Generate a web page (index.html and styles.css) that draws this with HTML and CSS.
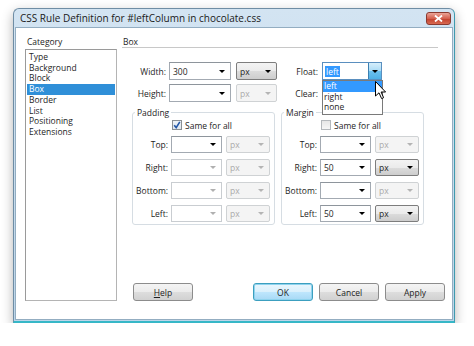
FILE: index.html
```html
<!DOCTYPE html>
<html lang="en">
<head>
  <meta charset="UTF-8">
  <meta name="viewport" content="width=device-width, initial-scale=1.0">
  <title>CSS Rule Definition</title>
  <link rel="stylesheet" href="styles.css">
</head>
<body>
  <div class="window">
    <div class="titlebar">
      <span class="title">CSS Rule Definition for #leftColumn in chocolate.css</span>
      <span class="close">
        <svg width="9" height="7" viewBox="0 0 9 7"><path d="M1 0.5 L8 6.5 M8 0.5 L1 6.5" stroke="#fff" stroke-width="1.8"/></svg>
      </span>
    </div>

    <div class="client">
      <div class="sidebar">
        <div class="caption">Category</div>
        <ul class="list">
          <li>Type</li>
          <li>Background</li>
          <li>Block</li>
          <li class="selected">Box</li>
          <li>Border</li>
          <li>List</li>
          <li>Positioning</li>
          <li>Extensions</li>
        </ul>
      </div>

      <div class="panel">
        <div class="heading">Box</div>

        <div class="form">
          <div class="toprow">
            <div class="col-left">
              <div class="row">
                <span class="lbl">Width:</span>
                <div class="combo wide"><span>300</span><i class="arrow"></i></div>
                <div class="unit narrow on"><span>px</span><i class="arrow"></i></div>
              </div>
              <div class="row">
                <span class="lbl">Height:</span>
                <div class="combo wide"><span></span><i class="arrow"></i></div>
                <div class="unit narrow"><span>px</span><i class="arrow"></i></div>
              </div>
            </div>
            <div class="col-right">
              <div class="row">
                <span class="lbl lbl-r">Float:</span>
                <div class="floatsel">
                  <span class="hl">left</span>
                  <span class="dropbtn"><i class="arrow"></i></span>
                  <ul class="droplist">
                    <li class="hot">left</li>
                    <li>right</li>
                    <li>none</li>
                  </ul>
                  <svg class="cursor" width="12" height="19" viewBox="0 0 12 19">
                    <path d="M0.5 0.5 L0.5 15 L4 11.8 L6.6 17.6 L8.6 16.7 L6.1 11 L10.6 11 Z" fill="#fff" stroke="#000" stroke-width="1"/>
                  </svg>
                </div>
              </div>
              <div class="row">
                <span class="lbl lbl-r">Clear:</span>
                <div class="combo float-w"><span></span><i class="arrow"></i></div>
              </div>
            </div>
          </div>

          <div class="groups">
            <fieldset class="group">
              <legend>Padding</legend>
              <div class="check-row"><span class="check checked">
                <svg width="8" height="8" viewBox="0 0 8 8"><path d="M1.2 4.2 L3.2 6.6 L6.8 0.8" fill="none" stroke="#2357a8" stroke-width="1.6"/></svg>
              </span>Same for all</div>
              <div class="row">
                <span class="lbl">Top:</span>
                <div class="combo"><span></span><i class="arrow"></i></div>
                <div class="unit"><span>px</span><i class="arrow"></i></div>
              </div>
              <div class="row">
                <span class="lbl">Right:</span>
                <div class="combo off"><span></span><i class="arrow"></i></div>
                <div class="unit"><span>px</span><i class="arrow"></i></div>
              </div>
              <div class="row">
                <span class="lbl">Bottom:</span>
                <div class="combo off"><span></span><i class="arrow"></i></div>
                <div class="unit"><span>px</span><i class="arrow"></i></div>
              </div>
              <div class="row">
                <span class="lbl">Left:</span>
                <div class="combo off"><span></span><i class="arrow"></i></div>
                <div class="unit"><span>px</span><i class="arrow"></i></div>
              </div>
            </fieldset>

            <fieldset class="group">
              <legend>Margin</legend>
              <div class="check-row"><span class="check"></span>Same for all</div>
              <div class="row">
                <span class="lbl">Top:</span>
                <div class="combo"><span></span><i class="arrow"></i></div>
                <div class="unit"><span>px</span><i class="arrow"></i></div>
              </div>
              <div class="row">
                <span class="lbl">Right:</span>
                <div class="combo"><span>50</span><i class="arrow"></i></div>
                <div class="unit on"><span>px</span><i class="arrow"></i></div>
              </div>
              <div class="row">
                <span class="lbl">Bottom:</span>
                <div class="combo"><span></span><i class="arrow"></i></div>
                <div class="unit"><span>px</span><i class="arrow"></i></div>
              </div>
              <div class="row">
                <span class="lbl">Left:</span>
                <div class="combo"><span>50</span><i class="arrow"></i></div>
                <div class="unit on"><span>px</span><i class="arrow"></i></div>
              </div>
            </fieldset>
          </div>
        </div>

        <div class="buttons">
          <button class="btn help"><u>H</u>elp</button>
          <button class="btn ok">OK</button>
          <button class="btn">Cancel</button>
          <button class="btn">Apply</button>
        </div>
      </div>
    </div>
  </div>
</body>
</html>
```

FILE: styles.css
```css
body {
  margin: 0;
  background: #fff;
  font-family: "Open Sans", "Noto Sans", sans-serif;
  font-size: 8.5px;
  color: #1e1e1e;
}

.window {
  margin: 8px 0 0 13px;
  width: 442px;
  height: 315px;
  box-sizing: border-box;
  padding: 0 1px 1px 1px;
  display: flex;
  flex-direction: column;
  background: linear-gradient(#d3e4f2, #bcd5e9);
  border: 1px solid #6f8da4;
  border-right-color: #3f9aae;
  border-bottom: 2px solid #36b7c7;
  border-radius: 6px 6px 0 0;
  box-shadow: 0 4px 12px rgba(0, 0, 0, 0.3);
}

.titlebar {
  height: 18px;
  display: flex;
  align-items: center;
  justify-content: space-between;
  padding-left: 5px;
  padding-right: 2px;
}

.title {
  font-size: 10px;
  color: #1a1a1a;
}

.close {
  width: 23px;
  height: 11px;
  margin-top: 1px;
  display: flex;
  align-items: center;
  justify-content: center;
  border: 1px solid #8a3a30;
  border-radius: 3px;
  background: linear-gradient(#eba497, #d4604e 50%, #c13f2c 51%, #d86a52);
}

.client {
  flex: 1;
  display: flex;
  background: #fff;
  border: 1px solid #93adc1;
  padding: 8px 7px 18px 9px;
}

/* category list */
.sidebar {
  width: 92px;
  display: flex;
  flex-direction: column;
}

.caption {
  line-height: 11px;
  padding-left: 2px;
  margin-bottom: 2px;
}

.list {
  flex: 1;
  margin: 0;
  padding: 2px 1px;
  list-style: none;
  border: 1px solid #9a9a9a;
  border-right-color: #b4b4b4;
  border-bottom-color: #b4b4b4;
}

.list li {
  line-height: 10.7px;
  padding-left: 2px;
}

.list .selected {
  background: #2f8fd8;
  color: #fff;
}

/* main panel */
.panel {
  flex: 1;
  margin-left: 5px;
  display: flex;
  flex-direction: column;
}

.heading {
  line-height: 11px;
  padding-left: 1px;
  margin-right: 7px;
  border-bottom: 1px solid #c8c8c8;
}

.form {
  margin-left: 10px;
  margin-top: 14px;
}

.toprow {
  display: flex;
}

.col-left {
  width: 149px;
}

.col-left .row,
.col-right .row {
  height: 18px;
  margin-bottom: 4px;
}

.row {
  display: flex;
  align-items: center;
  height: 18px;
}

.lbl {
  width: 34px;
  margin-right: 3px;
  text-align: right;
}

.lbl-r {
  width: 37px;
  margin-right: 4px;
}

.combo,
.unit {
  box-sizing: border-box;
  height: 17px;
  display: flex;
  align-items: center;
  justify-content: space-between;
  padding: 0 5px 0 3px;
}

.combo {
  width: 51px;
  background: #fff;
  border: 1px solid #a3aab2;
  border-top-color: #8e959c;
}

.combo.wide {
  width: 62px;
  height: 18px;
}

.combo.float-w {
  width: 59px;
}

.combo.off {
  border-color: #c9cdd1;
}

.combo.off .arrow {
  border-top-color: #b0b0b0;
}

.unit {
  width: 44px;
  margin-left: 4px;
  background: #f4f4f4;
  border: 1px solid #cfd2d4;
  border-radius: 2px;
  color: #a9a9a9;
}

.unit .arrow {
  border-top-color: #b4b4b4;
}

.unit.narrow {
  width: 41px;
  height: 18px;
  margin-left: 5px;
}

.unit.on {
  color: #1e1e1e;
  border-color: #7d7d7d;
  background: linear-gradient(#f3f3f3, #ebebeb 50%, #dcdcdc 51%, #cdcdcd);
}

.unit.on .arrow {
  border-top-color: #000;
}

.arrow {
  width: 0;
  height: 0;
  border-left: 3px solid transparent;
  border-right: 3px solid transparent;
  border-top: 3px solid #000;
}

/* float dropdown, open */
.floatsel {
  position: relative;
  box-sizing: border-box;
  width: 60px;
  height: 18px;
  display: flex;
  align-items: center;
  justify-content: space-between;
  padding-left: 2px;
  border: 1px solid #5a8fbf;
  background: #fff;
}

.hl {
  background: #3399ff;
  color: #fff;
  line-height: 11px;
  padding: 0 1px;
}

.dropbtn {
  align-self: stretch;
  width: 12px;
  display: flex;
  align-items: center;
  justify-content: center;
  border-left: 1px solid #3c7fb1;
  background: linear-gradient(#d6eefb, #a9daf5 50%, #6cc0ee 51%, #4fb0e6);
}

.droplist {
  position: absolute;
  top: 17px;
  left: -1px;
  width: 61px;
  box-sizing: border-box;
  margin: 0;
  padding: 0 0 1px;
  list-style: none;
  background: #fff;
  border: 1px solid #7a7a7a;
  z-index: 2;
}

.droplist li {
  line-height: 10.5px;
  padding-left: 1px;
}

.droplist .hot {
  background: #3399ff;
  color: #fff;
}

.cursor {
  position: absolute;
  left: 52px;
  top: 18px;
  z-index: 3;
}

/* padding / margin groups */
.groups {
  display: flex;
  gap: 6px;
  margin-top: 1px;
}

.group {
  width: 143px;
  box-sizing: border-box;
  margin: 0;
  padding: 0 0 2px;
  border: 1px solid #d6dde3;
  border-radius: 3px;
}

.group legend {
  padding: 0 2px;
  margin-left: 2px;
  line-height: 11px;
}

.group .row {
  height: 18px;
  margin-top: 5px;
}

.group .lbl {
  width: 35px;
}

.check-row {
  display: flex;
  align-items: center;
  height: 10px;
  margin-top: 2px;
  padding-left: 39px;
}

.check {
  box-sizing: border-box;
  width: 10px;
  height: 10px;
  margin-right: 3px;
  display: flex;
  align-items: center;
  justify-content: center;
  border: 1px solid #b4b8bc;
  background: linear-gradient(#e6e6e6, #f6f6f6);
}

.check.checked {
  border-color: #8a8f94;
  background: linear-gradient(#eef3f8, #dfe6ee);
}

/* dialog buttons */
.buttons {
  margin-top: auto;
  display: flex;
  gap: 6px;
}

.btn {
  width: 60px;
  height: 18px;
  padding: 0;
  font-family: "Open Sans", "Noto Sans", sans-serif;
  font-size: 8.5px;
  color: #1e1e1e;
  border: 1px solid #8c8c8c;
  border-radius: 3px;
  background: linear-gradient(#f4f4f4, #ebebeb 50%, #dddddd 51%, #d1d1d1);
}

.btn u {
  text-decoration: underline;
}

.help {
  margin-left: 11px;
  margin-right: auto;
}

.ok {
  border-color: #3c9fbf;
  box-shadow: inset 0 0 0 1px #8fd3ee;
  background: linear-gradient(#eaf6fd, #d9f0fc 50%, #bee6fd 51%, #a7d9f5);
}
```
